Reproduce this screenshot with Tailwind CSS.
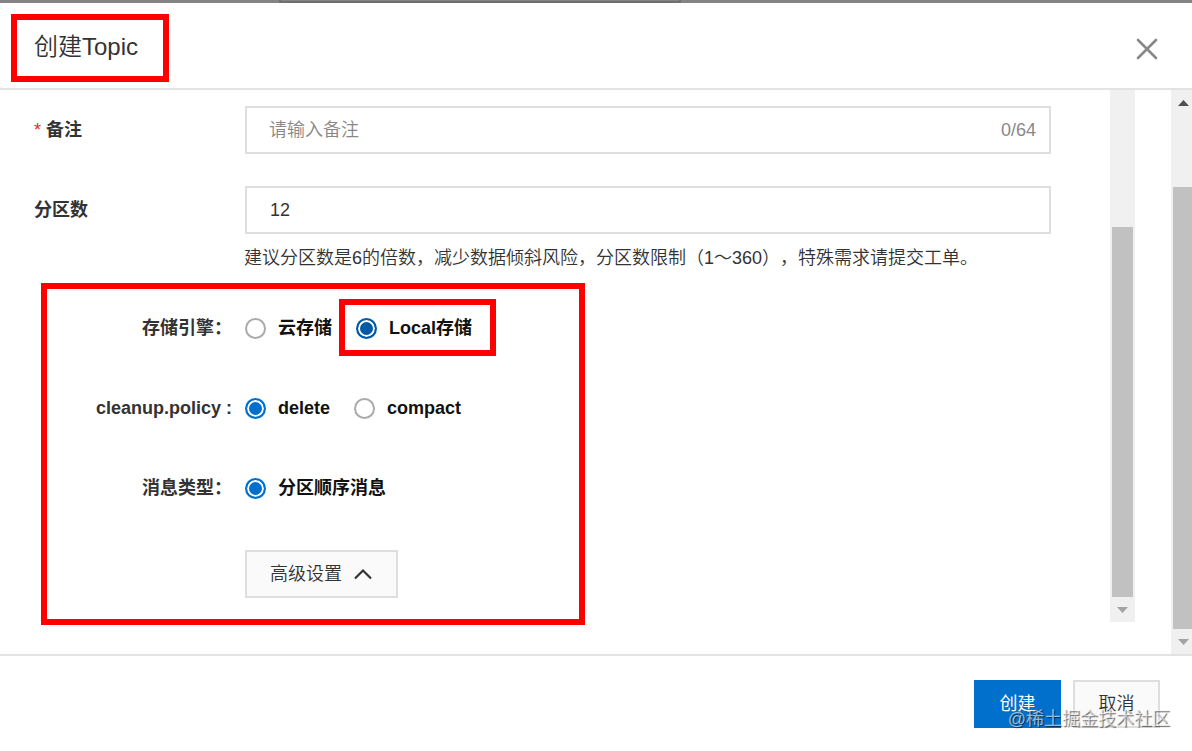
<!DOCTYPE html>
<html lang="zh-CN">
<head>
    <meta charset="UTF-8">
    <meta name="viewport" content="width=device-width, initial-scale=1.0">
    <title>创建Topic</title>
    <script src="https://cdn.jsdelivr.net/npm/@tailwindcss/browser@4"></script>
</head>
<body class="font-['Liberation_Sans','Noto_Sans_CJK_SC',sans-serif] text-lg/6 text-[#333] bg-white">

    <div class="relative flex flex-col min-h-screen">

        <!-- Page behind the dialog -->
        <div class="flex h-[3px] bg-[#858383]">
            <div class="ml-[279px] w-[402px] bg-[#858383] border-2 border-t-0 border-[#706e6e]"></div>
        </div>

        <!-- Header -->
        <header class="flex items-center justify-between h-[87px] pl-[34px] pr-[34px] border-b-2 border-[#e3e3e3]">
            <h2 class="pt-[2px] text-2xl font-[350]">创建Topic</h2>
            <button type="button" aria-label="关闭" class="mt-[6px]">
                <svg class="size-[22px]" viewBox="0 0 22 22" fill="none" stroke="#888" stroke-width="2.6" stroke-linecap="round">
                    <path d="M2 2l18 18M20 2L2 20"/>
                </svg>
            </button>
        </header>

        <!-- Body -->
        <main class="flex flex-1">
            <form id="topic-form" class="flex-1 pl-[34px] pr-[59px] pt-4">
                <div class="flex items-center mb-8">
                    <label for="remark" class="w-[211px] font-bold"><span class="text-[#d93026] font-normal">*</span> 备注</label>
                    <div class="flex flex-1 items-center h-12 border-2 border-[#dedede] pl-[22px] pr-[13px]">
                        <input type="text" id="remark" placeholder="请输入备注" class="flex-1 font-[350] outline-none placeholder:text-[#888]">
                        <span class="text-[#888]">0/64</span>
                    </div>
                </div>

                <div class="flex items-center">
                    <label for="partitions" class="w-[211px] font-bold">分区数</label>
                    <input type="text" id="partitions" value="12" class="flex-1 h-12 border-2 border-[#dedede] px-[23px] outline-none">
                </div>
                <p class="ml-[210px] mt-3 mb-[34px] font-[350] [text-spacing-trim:space-all]">建议分区数是6的倍数，减少数据倾斜风险，分区数限制（1～360），特殊需求请提交工单。</p>

                <div role="radiogroup" aria-labelledby="engine-label" class="flex items-center h-12 mb-8 font-bold">
                    <span id="engine-label" class="w-[211px] pr-[13px] text-right [text-spacing-trim:space-all]">存储引擎：</span>
                    <div class="flex gap-6 text-[#111]">
                        <label class="flex items-center gap-3">
                            <input type="radio" name="engine" class="appearance-none size-[21px] rounded-full border-2 border-[#aaa] bg-white checked:border-[#005aa5] checked:bg-[#005aa5] checked:shadow-[inset_0_0_0_2px_white]">
                            云存储
                        </label>
                        <label class="flex items-center gap-3">
                            <input type="radio" name="engine" checked class="appearance-none size-[21px] rounded-full border-2 border-[#aaa] bg-white checked:border-[#005aa5] checked:bg-[#005aa5] checked:shadow-[inset_0_0_0_2px_white]">
                            Local存储
                        </label>
                    </div>
                </div>

                <div role="radiogroup" aria-labelledby="policy-label" class="flex items-center h-12 mb-8 font-bold">
                    <span id="policy-label" class="w-[211px] pr-[13px] text-right">cleanup.policy :</span>
                    <div class="flex gap-6 text-[#111]">
                        <label class="flex items-center gap-3">
                            <input type="radio" name="policy" checked class="appearance-none size-[21px] rounded-full border-2 border-[#aaa] bg-white checked:border-[#0070cc] checked:bg-[#0070cc] checked:shadow-[inset_0_0_0_2px_white]">
                            delete
                        </label>
                        <label class="flex items-center gap-3">
                            <input type="radio" name="policy" class="appearance-none size-[21px] rounded-full border-2 border-[#aaa] bg-white checked:border-[#0070cc] checked:bg-[#0070cc] checked:shadow-[inset_0_0_0_2px_white]">
                            compact
                        </label>
                    </div>
                </div>

                <div role="radiogroup" aria-labelledby="type-label" class="flex items-center h-12 mb-[38px] font-bold">
                    <span id="type-label" class="w-[211px] pr-[13px] text-right [text-spacing-trim:space-all]">消息类型：</span>
                    <label class="flex items-center gap-3 text-[#111]">
                        <input type="radio" name="type" checked class="appearance-none size-[21px] rounded-full border-2 border-[#aaa] bg-white checked:border-[#0070cc] checked:bg-[#0070cc] checked:shadow-[inset_0_0_0_2px_white]">
                        分区顺序消息
                    </label>
                </div>

                <button type="button" class="flex items-center gap-3 h-12 ml-[211px] pl-[23px] pr-6 border-2 border-[#dedede] bg-[#fafafa] font-[350]">
                    高级设置
                    <svg class="w-[18px] h-3" viewBox="0 0 18 12" fill="none" stroke="#333" stroke-width="2.2">
                        <path d="M1 10.5L9 2.5l8 8"/>
                    </svg>
                </button>
            </form>

            <!-- Inner scrollbar -->
            <div class="flex flex-col w-[25px] mb-8 mr-9 px-[2px] bg-[#f0f0f0]">
                <div class="h-[137px]"></div>
                <div class="flex-1 bg-[#c1c1c1]"></div>
                <div class="flex items-center justify-center h-[25px]">
                    <svg class="w-[11px] h-[6px]" viewBox="0 0 11 6" fill="#a3a3a3"><path d="M0 0h11L5.500 6z"/></svg>
                </div>
            </div>

            <!-- Outer scrollbar -->
            <div class="flex flex-col w-[21px] pl-[2px] bg-[#f0f0f0]">
                <div class="flex items-center justify-center h-[25px] mb-[72px] pl-[2px]">
                    <svg class="w-[11px] h-[6px]" viewBox="0 0 11 6" fill="#505050"><path d="M0 6h11L5.500 0z"/></svg>
                </div>
                <div class="flex-1 bg-[#c1c1c1]"></div>
                <div class="flex items-center justify-center h-[25px] pl-[2px]">
                    <svg class="w-[11px] h-[6px]" viewBox="0 0 11 6" fill="#a3a3a3"><path d="M0 0h11L5.500 6z"/></svg>
                </div>
            </div>
        </main>

        <!-- Footer -->
        <footer class="flex justify-end gap-3 pt-6 pb-[23px] pr-8 border-t-2 border-[#e3e3e3]">
            <button type="submit" form="topic-form" class="w-[87px] h-12 bg-[#0070cc] text-white">创建</button>
            <button type="button" class="w-[87px] h-12 border-2 border-[#dedede] bg-[#fafafa] font-[350]">取消</button>
        </footer>

        <!-- Red highlight frames -->
        <div class="absolute left-[11px] top-[14px] w-[158px] h-[68px] border-6 border-[#f00] pointer-events-none"></div>
        <div class="absolute left-[41px] top-[283px] w-[544px] h-[342px] border-6 border-[#f00] pointer-events-none"></div>
        <div class="absolute left-[339px] top-[299px] w-[157px] h-[57px] border-6 border-[#f00] pointer-events-none"></div>

        <!-- Watermark -->
        <div class="absolute right-[22px] bottom-5 text-white/60 font-normal text-shadow-[1px_1px_1px_rgb(0_0_0/0.6)] pointer-events-none">@稀土掘金技术社区</div>
    </div>

</body>
</html>
